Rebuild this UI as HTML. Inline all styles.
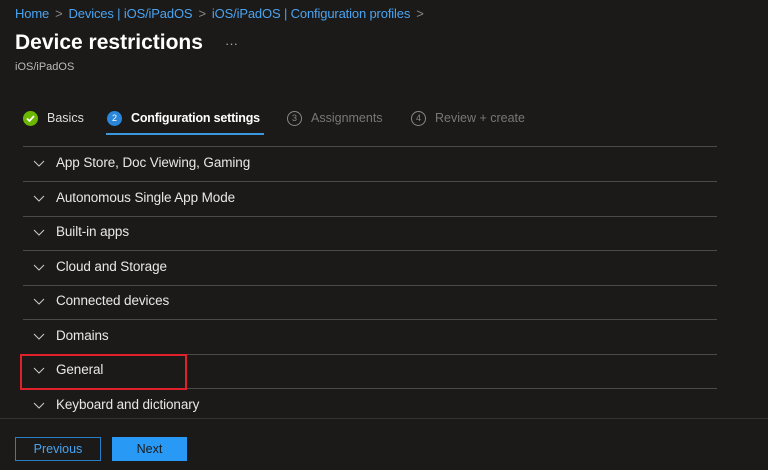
<!DOCTYPE html>
<html><head><style>
body{margin:0;width:768px;height:470px;background:#1b1a19;font-family:"Liberation Sans",sans-serif;color:#fff;position:relative;overflow:hidden}
.a{position:absolute}
.bc{top:6px;left:15px;font-size:13px;color:#4aa3f0;white-space:nowrap;letter-spacing:-0.15px}
.bc span{color:#888;margin:0 6px}
.row{position:absolute;left:23px;width:694px;height:34px;border-bottom:1px solid #4a4a4a;font-size:13.5px;color:#e8e8e8;letter-spacing:-0.1px}
.row .t{position:absolute;left:33px;top:8px}
.row svg{position:absolute;left:10px;top:13px}
.circ{position:absolute;width:15px;height:15px;border-radius:50%;font-size:9px;text-align:center;line-height:15px}
.tab{position:absolute;top:111px;font-size:12.5px}
</style></head><body>
<div class="a bc">Home<span>&gt;</span>Devices | iOS/iPadOS<span>&gt;</span>iOS/iPadOS | Configuration profiles<span>&gt;</span></div>
<div class="a" style="top:31px;left:15px;font-size:21px;font-weight:bold;color:#fff">Device restrictions</div>
<div class="a" style="top:36px;left:225px;font-size:13px;color:#aaa">···</div>
<div class="a" style="top:61px;left:15px;font-size:11px;color:#bbb">iOS/iPadOS</div>
<div class="circ" style="left:23px;top:111px;background:#6bb700;color:#fff"><svg width="15" height="15"><path d="M4 7.5l2.5 2.5 4.5-5" stroke="#fff" stroke-width="1.8" fill="none"/></svg></div>
<div class="tab" style="left:47px;color:#ddd">Basics</div>
<div class="circ" style="left:107px;top:111px;background:#2a86d8;color:#fff">2</div>
<div class="tab" style="left:131px;font-weight:bold;color:#fff;letter-spacing:-0.2px">Configuration settings</div>
<div class="a" style="left:106px;top:133px;width:158px;height:2px;background:#3a96dd"></div>
<div class="circ" style="left:287px;top:111px;border:1px solid #888;color:#888;width:13px;height:13px;line-height:13px">3</div>
<div class="tab" style="left:311px;color:#777">Assignments</div>
<div class="circ" style="left:411px;top:111px;border:1px solid #888;color:#888;width:13px;height:13px;line-height:13px">4</div>
<div class="tab" style="left:435px;color:#777">Review + create</div>
<div class="a" style="left:23px;top:146px;width:694px;height:1px;background:#4a4a4a"></div>
<div class="row" style="top:147px"><svg width="12" height="8"><path d="M1 1l5 5 5-5" stroke="#ccc" fill="none"/></svg><div class="t">App Store, Doc Viewing, Gaming</div></div>
<div class="row" style="top:181.5px"><svg width="12" height="8"><path d="M1 1l5 5 5-5" stroke="#ccc" fill="none"/></svg><div class="t">Autonomous Single App Mode</div></div>
<div class="row" style="top:216px"><svg width="12" height="8"><path d="M1 1l5 5 5-5" stroke="#ccc" fill="none"/></svg><div class="t">Built-in apps</div></div>
<div class="row" style="top:250.5px"><svg width="12" height="8"><path d="M1 1l5 5 5-5" stroke="#ccc" fill="none"/></svg><div class="t">Cloud and Storage</div></div>
<div class="row" style="top:285px"><svg width="12" height="8"><path d="M1 1l5 5 5-5" stroke="#ccc" fill="none"/></svg><div class="t">Connected devices</div></div>
<div class="row" style="top:319.5px"><svg width="12" height="8"><path d="M1 1l5 5 5-5" stroke="#ccc" fill="none"/></svg><div class="t">Domains</div></div>
<div class="row" style="top:354px"><svg width="12" height="8"><path d="M1 1l5 5 5-5" stroke="#ccc" fill="none"/></svg><div class="t">General</div></div>
<div class="row" style="top:388.5px;border-bottom:none"><svg width="12" height="8"><path d="M1 1l5 5 5-5" stroke="#ccc" fill="none"/></svg><div class="t">Keyboard and dictionary</div></div>
<div class="a" style="left:20px;top:354px;width:163px;height:32px;border:2px solid #e0202a"></div>
<div class="a" style="left:0;top:418px;width:768px;height:1px;background:#333"></div>
<div class="a" style="left:15px;top:437px;width:84px;height:22px;border:1px solid #2a7fc4;color:#4aa3f0;font-size:12.5px;text-align:center;line-height:22px">Previous</div>
<div class="a" style="left:112px;top:437px;width:75px;height:24px;background:#2899f5;color:#1b1a19;font-size:12.5px;text-align:center;line-height:24px">Next</div>
</body></html>
